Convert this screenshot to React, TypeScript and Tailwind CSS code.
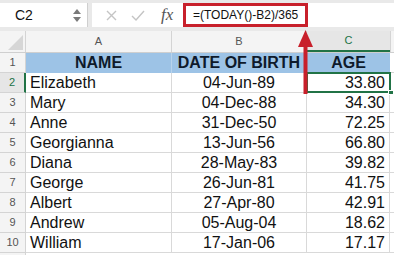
import React from "react";

const rows = [
  { name: "Elizabeth", dob: "04-Jun-89", age: "33.80" },
  { name: "Mary", dob: "04-Dec-88", age: "34.30" },
  { name: "Anne", dob: "31-Dec-50", age: "72.25" },
  { name: "Georgianna", dob: "13-Jun-56", age: "66.80" },
  { name: "Diana", dob: "28-May-83", age: "39.82" },
  { name: "George", dob: "26-Jun-81", age: "41.75" },
  { name: "Albert", dob: "27-Apr-80", age: "42.91" },
  { name: "Andrew", dob: "05-Aug-04", age: "18.62" },
  { name: "William", dob: "17-Jan-06", age: "17.17" },
];

const font = { fontFamily: '"Liberation Sans", Arial, sans-serif' };

export default function App() {
  return (
    <div className="relative w-[394px] h-[255px] overflow-hidden bg-white text-[#111]" style={font}>
      {/* Formula bar */}
      <div className="flex h-[31px] bg-[#e9e9e9] pt-[3px] pb-[4px]">
        <div className="flex items-center w-[88px] bg-white border-r border-[#cfcfcf] pl-[15px] pr-[6px]">
          <span className="text-[14px] flex-1">C2</span>
          <div className="flex flex-col items-center gap-[3px] text-[#7a7a7a]">
            <svg width="8" height="5" viewBox="0 0 8 5"><path d="M4 0L8 5H0z" fill="currentColor" /></svg>
            <svg width="8" height="5" viewBox="0 0 8 5"><path d="M0 0H8L4 5z" fill="currentColor" /></svg>
          </div>
        </div>
        <div className="w-[4px]" />
        <div className="flex items-center w-[91px] bg-white pl-[14px] gap-[14px] text-[#c4c4c4]">
          <svg width="11" height="11" viewBox="0 0 11 11"><path d="M1 1L10 10M10 1L1 10" stroke="currentColor" strokeWidth="1.4" /></svg>
          <svg width="14" height="11" viewBox="0 0 14 11"><path d="M1 6L5 10L13 1" stroke="currentColor" strokeWidth="1.4" fill="none" /></svg>
          <span className="text-[17px] italic text-[#555] ml-[2px]" style={{ fontFamily: '"Liberation Serif", serif' }}>fx</span>
        </div>
        <div className="flex-1 bg-white">
          <div className="h-full w-[125px] border-[3px] border-[#c8202b] flex items-center pl-[7px] text-[12px]">
            =(TODAY()-B2)/365
          </div>
        </div>
      </div>

      {/* Column headers */}
      <div className="flex h-[22px] bg-[#f4f4f4] border-b border-[#cfcfcf] text-[11px] text-[#555]">
        <div className="relative w-[26px] border-r border-[#d4d4d4]">
          <svg className="absolute right-[2px] bottom-[2px]" width="15" height="15" viewBox="0 0 15 15"><path d="M15 0V15H0z" fill="#d6d6d6" /></svg>
        </div>
        <div className="w-[146px] flex items-center justify-center border-r border-[#d4d4d4]">A</div>
        <div className="w-[135px] flex items-center justify-center border-r border-[#d4d4d4]">B</div>
        <div className="w-[83px] flex items-center justify-center border-b-2 border-b-[#217346] text-[#217346] bg-[#e6e6e6]">C</div>
        <div className="flex-1 border-l border-[#d4d4d4]" />
      </div>

      {/* Header row */}
      <div className="flex h-[20px]">
        <div className="w-[26px] flex items-center justify-center bg-[#f4f4f4] border-r border-b border-[#d4d4d4] text-[11px] text-[#555]">1</div>
        <div className="w-[146px] flex items-center justify-center bg-[#9dc3e6] font-bold text-[16px] border-r border-[#b8d3ec] text-[#0e1a2b]">NAME</div>
        <div className="w-[135px] flex items-center justify-center bg-[#9dc3e6] font-bold text-[16px] border-r border-[#b8d3ec] text-[#0e1a2b]">DATE OF BIRTH</div>
        <div className="w-[83px] flex items-center justify-center bg-[#9dc3e6] font-bold text-[16px] text-[#0e1a2b]">AGE</div>
        <div className="flex-1 border-b border-[#d4d4d4]" />
      </div>

      {rows.map((r, i) => (
        <div key={i} className="flex h-[20px] text-[16px]">
          <div
            className={
              i === 0
                ? "w-[26px] flex items-center justify-center bg-[#e6e6e6] border-r-2 border-r-[#217346] border-b border-[#d4d4d4] text-[11px] text-[#217346]"
                : "w-[26px] flex items-center justify-center bg-[#f4f4f4] border-r border-b border-[#d4d4d4] text-[11px] text-[#555]"
            }
          >
            {i + 2}
          </div>
          <div className="w-[146px] flex items-center pl-[4px] border-r border-b border-[#d9d9d9]">{r.name}</div>
          <div className="w-[135px] flex items-center justify-center border-r border-b border-[#d9d9d9]">{r.dob}</div>
          <div className="w-[83px] flex items-center justify-end pr-[4px] border-r border-b border-[#d9d9d9]">{r.age}</div>
          <div className="flex-1 border-b border-[#d9d9d9]" />
        </div>
      ))}
      <div className="flex h-[20px]">
        <div className="w-[26px] bg-[#f4f4f4] border-r border-[#d4d4d4]" />
      </div>

      {/* Selected cell C2 */}
      <div className="absolute left-[306px] top-[72px] w-[85px] h-[21px] border-2 border-[#217346] pointer-events-none" />
      <div className="absolute left-[388px] top-[90px] w-[6px] h-[5px] bg-[#217346] border border-white" />

      {/* Red arrow */}
      <svg className="absolute left-[297px] top-[30px]" width="17" height="64" viewBox="0 0 17 64">
        <rect x="6.5" y="12" width="4" height="52" fill="#c8202b" />
        <path d="M8.5 0L16 17H1z" fill="#c8202b" />
      </svg>
    </div>
  );
}
